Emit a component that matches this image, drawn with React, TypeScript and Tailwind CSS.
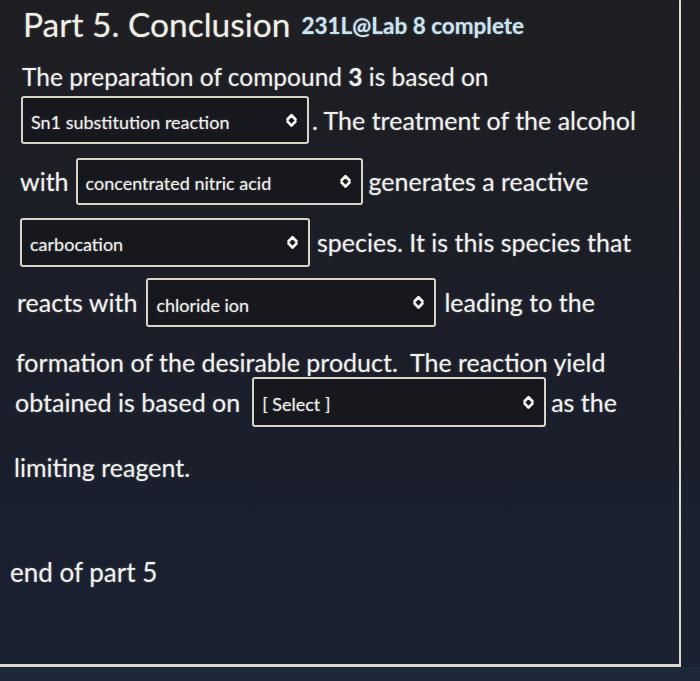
import React from "react";

const glow = "[text-shadow:0_0_2px_rgba(255,255,255,0.35)]";

function Chevrons() {
  return (
    <svg width="11" height="15" viewBox="0 0 11 15" fill="none" className="shrink-0">
      <path d="M1.6 6.3 L5.5 2.2 L9.4 6.3" stroke="#f6f6f2" strokeWidth="2.7" strokeLinecap="round" strokeLinejoin="round" />
      <path d="M1.6 8.5 L5.5 12.6 L9.4 8.5" stroke="#f6f6f2" strokeWidth="2.7" strokeLinecap="round" strokeLinejoin="round" />
    </svg>
  );
}

function Select({ label, w, h }: { label: string; w: string; h: string }) {
  return (
    <div
      className={`${w} ${h} shrink-0 flex items-center justify-between rounded-[3px] border-2 border-[#d8d5c6] bg-[#17181e] pl-[8px] pr-[10px]`}
    >
      <span className={`text-[18px] leading-none pt-[4px] text-[#f3f3ef] ${glow}`}>{label}</span>
      <Chevrons />
    </div>
  );
}

export default function App() {
  return (
    <div
      className="relative w-[700px] h-[681px] overflow-hidden bg-gradient-to-b from-[#1e1e22] via-[#1b1e29] to-[#1a2132]"
      style={{ fontFamily: "Lato, 'Noto Sans', sans-serif" }}
    >
      <div className="w-[681px] h-[667px] border-r-2 border-b-[3px] border-[#dedac9] text-[#f2f2ee]">
        <div className="h-[50px] flex items-center pl-[23px]">
          <span className={`text-[33.5px] leading-none text-[#f1f0e6] ${glow}`}>Part 5. Conclusion</span>
          <span className={`ml-[11px] text-[22.5px] leading-none font-bold text-[#c9e6f4] pt-[3px] ${glow}`}>231L@Lab 8 complete</span>
        </div>

        <div className={`mt-[8px] h-[38px] flex items-center pl-[22px] text-[24.5px] leading-none ${glow}`}>
          <span>
            The preparation of compound <b className="font-bold">3</b> is based on
          </span>
        </div>

        <div className={`h-[48px] flex items-center pl-[21px] text-[25px] leading-none ${glow}`}>
          <Select label="Sn1 substitution reaction" w="w-[288px]" h="h-[48px]" />
          <span className="ml-[3px]">. The treatment of the alcohol</span>
        </div>

        <div className={`mt-[13px] h-[48px] flex items-center pl-[20px] text-[25px] leading-none ${glow}`}>
          <span className="mr-[7px]">with</span>
          <Select label="concentrated nitric acid" w="w-[287px]" h="h-[47px]" />
          <span className="ml-[6px]">generates a reactive</span>
        </div>

        <div className={`mt-[13px] h-[48px] flex items-center pl-[20px] text-[25px] leading-none ${glow}`}>
          <Select label="carbocation" w="w-[290px]" h="h-[49px]" />
          <span className="ml-[7px]">species. It is this species that</span>
        </div>

        <div className={`mt-[12px] h-[49px] flex items-center pl-[17px] text-[25px] leading-none ${glow}`}>
          <span className="mr-[9px]">reacts with</span>
          <Select label="chloride ion" w="w-[290px]" h="h-[49px]" />
          <span className="ml-[8px]">leading to the</span>
        </div>

        <div className={`mt-[20px] h-[30px] flex items-center pl-[16px] text-[25px] leading-none ${glow}`}>
          <span className="whitespace-pre">formation of the desirable product.  The reaction yield</span>
        </div>

        <div className={`h-[50px] flex items-center pl-[15px] text-[25px] leading-none ${glow}`}>
          <span className="mr-[12px]">obtained is based on</span>
          <Select label="[ Select ]" w="w-[294px]" h="h-[50px]" />
          <span className="ml-[5px]">as the</span>
        </div>

        <div className={`mt-[25px] h-[30px] flex items-center pl-[14px] text-[25px] leading-none ${glow}`}>
          <span>limiting reagent.</span>
        </div>

        <div className={`mt-[75px] h-[30px] flex items-center pl-[10px] text-[26px] leading-none ${glow}`}>
          <span>end of part 5</span>
        </div>
      </div>
      <div className="h-[14px] bg-[#1d2839]" />
    </div>
  );
}
